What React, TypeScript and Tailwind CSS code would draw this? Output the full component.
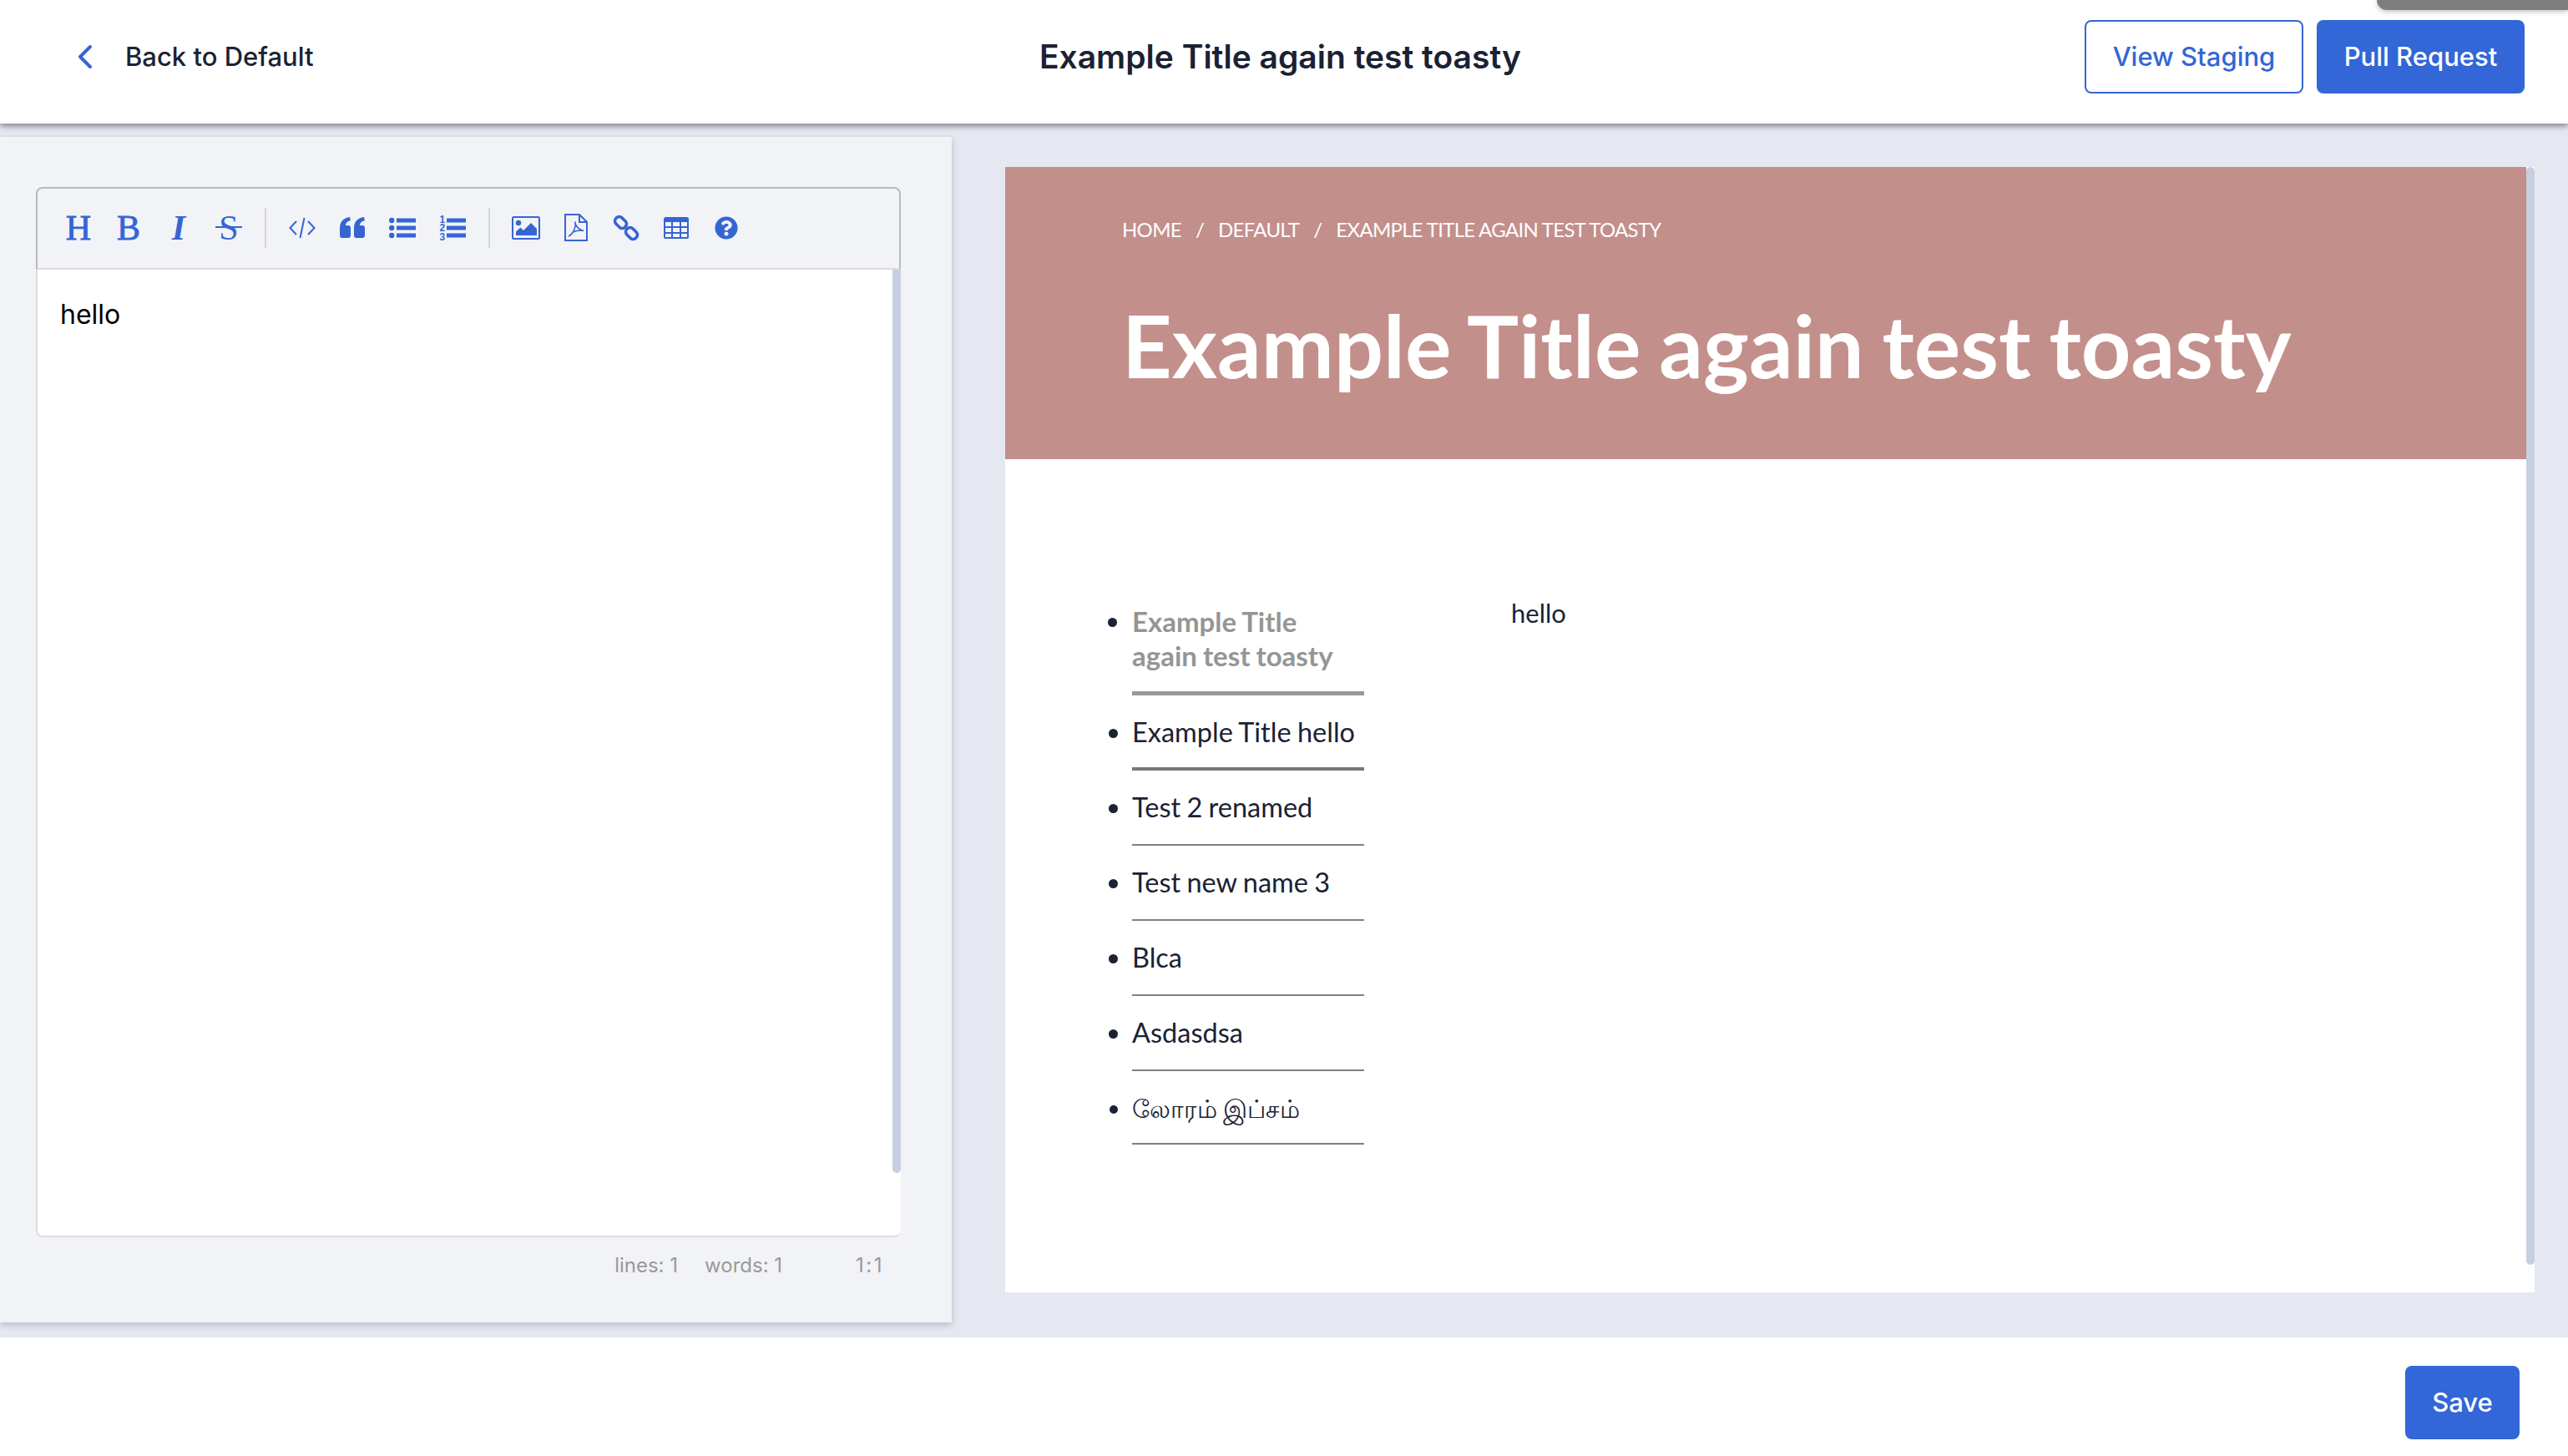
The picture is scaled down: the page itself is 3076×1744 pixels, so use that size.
import React from 'react';
import { ChevronLeft } from 'lucide-react';
import { FaQuestionCircle } from 'react-icons/fa';

const blue = 'text-[#3565d2]';

const CodeIcon = () => (
  <svg width="32" height="26" viewBox="0 0 32 26" fill="none" stroke="currentColor" strokeWidth="2">
    <path d="M9 5 L1.500 13 L9 21" />
    <path d="M23 5 L30.500 13 L23 21" />
    <path d="M18.500 1 L13.500 25" />
  </svg>
);

const QuoteIcon = () => (
  <svg width="30" height="26" viewBox="0 0 30 26" fill="currentColor">
    <path d="M0 13 C0 6 4 1 12 0 L13 4 C9 5 7 7 7 10 L10 10 A3 3 0 0 1 13 13 V22 A3 3 0 0 1 10 25 H3 A3 3 0 0 1 0 22 Z" />
    <path d="M17 13 C17 6 21 1 29 0 L30 4 C26 5 24 7 24 10 L27 10 A3 3 0 0 1 30 13 V22 A3 3 0 0 1 27 25 H20 A3 3 0 0 1 17 22 Z" />
  </svg>
);

const ListIcon = () => (
  <svg width="32" height="26" viewBox="0 0 32 26" fill="currentColor">
    <circle cx="3.200" cy="4" r="3.200" />
    <circle cx="3.200" cy="13" r="3.200" />
    <circle cx="3.200" cy="22" r="3.200" />
    <rect x="9" y="1.500" width="23" height="5" />
    <rect x="9" y="10.500" width="23" height="5" />
    <rect x="9" y="19.500" width="23" height="5" />
  </svg>
);

const OrderedListIcon = () => (
  <svg width="32" height="36" viewBox="0 0 32 36" fill="currentColor" className="overflow-visible">
    <rect x="9" y="6.500" width="23" height="5" />
    <rect x="9" y="15.500" width="23" height="5" />
    <rect x="9" y="24.500" width="23" height="5" />
    <g fontFamily="Liberation Sans, sans-serif" fontWeight="700" fontSize="12">
      <text x="0.500" y="11.500">1</text>
      <text x="0.500" y="22">2</text>
      <text x="0.500" y="32.500">3</text>
    </g>
  </svg>
);

const ImageIcon = () => (
  <svg width="34" height="28" viewBox="0 0 34 28" fill="currentColor">
    <rect x="1" y="1" width="32" height="26" rx="1.500" fill="none" stroke="currentColor" strokeWidth="2" />
    <circle cx="8" cy="8" r="3.200" />
    <path d="M5 23 V18.500 L10.500 13.500 L14 17 L23 8 L30 15 V23 Z" />
  </svg>
);

const PdfIcon = () => (
  <svg width="28" height="33" viewBox="0 0 28 33" fill="none" stroke="currentColor" strokeWidth="2">
    <path d="M1 1 H18 L27 10 V32 H1 Z" />
    <path d="M18 1 V10 H27" />
    <path d="M5 27 C9 25 12 20 13 15 C13.500 12 12.500 9.500 12.500 9.500 C13.500 15 17 19 23 20.500 C18 19 11 21 8 24" strokeWidth="1.500" />
  </svg>
);

const LinkIcon = () => (
  <svg width="32" height="32" viewBox="0 0 32 32" fill="none" stroke="currentColor" strokeWidth="3.600">
    <rect x="2" y="4.500" width="15" height="10" rx="4.500" transform="rotate(45 9.500 9.500)" />
    <rect x="15" y="17.500" width="15" height="10" rx="4.500" transform="rotate(45 22.500 22.500)" />
  </svg>
);

const TableIcon = () => (
  <svg width="30" height="26" viewBox="0 0 30 26" fill="currentColor">
    <path
      fillRule="evenodd"
      d="M2.500 0 H27.500 A2.500 2.500 0 0 1 30 2.500 V23.500 A2.500 2.500 0 0 1 27.500 26 H2.500 A2.500 2.500 0 0 1 0 23.500 V2.500 A2.500 2.500 0 0 1 2.500 0 Z
      M2 6 V11 H9 V6 Z M11 6 V11 H19 V6 Z M21 6 V11 H28 V6 Z
      M2 13 V18 H9 V13 Z M11 13 V18 H19 V13 Z M21 13 V18 H28 V13 Z
      M2 20 V24 H9 V20 Z M11 20 V24 H19 V20 Z M21 20 V24 H28 V20 Z"
    />
  </svg>
);

const ToolButton = ({ children }: { children: React.ReactNode }) => (
  <div className={`w-[60px] h-[36px] flex items-center justify-center ${blue}`}>{children}</div>
);

const Divider = () => (
  <div className="w-[28px] flex justify-center">
    <div className="w-[2px] h-[48px] bg-[#d6d6d6]" />
  </div>
);

const Letter = ({ children, className }: { children: string; className: string }) => (
  <span className={`font-['Liberation_Serif',serif] text-[42px] leading-none ${className}`}>{children}</span>
);

const Toolbar = () => (
  <div className="h-[99px] flex items-center pl-[19px] pb-[2px] bg-[#f2f3f7] border-2 border-[#b9babc] border-b-[#dddddd] rounded-t-[8px]">
    <ToolButton>
      <Letter className="[-webkit-text-stroke:0.8px_#3565d2]">H</Letter>
    </ToolButton>
    <ToolButton>
      <Letter className="[-webkit-text-stroke:0.8px_#3565d2]">B</Letter>
    </ToolButton>
    <ToolButton>
      <Letter className="font-bold italic">I</Letter>
    </ToolButton>
    <ToolButton>
      <span className="relative flex justify-center w-[32px]">
        <Letter className="">S</Letter>
        <span className="absolute left-0 right-0 top-[19px] h-[2px] bg-[#3565d2]" />
      </span>
    </ToolButton>
    <Divider />
    <ToolButton>
      <CodeIcon />
    </ToolButton>
    <ToolButton>
      <QuoteIcon />
    </ToolButton>
    <ToolButton>
      <ListIcon />
    </ToolButton>
    <ToolButton>
      <OrderedListIcon />
    </ToolButton>
    <Divider />
    <ToolButton>
      <ImageIcon />
    </ToolButton>
    <ToolButton>
      <PdfIcon />
    </ToolButton>
    <ToolButton>
      <LinkIcon />
    </ToolButton>
    <ToolButton>
      <TableIcon />
    </ToolButton>
    <ToolButton>
      <FaQuestionCircle size={28} />
    </ToolButton>
  </div>
);

const navItems = ['Test 2 renamed', 'Test new name 3', 'Blca', 'Asdasdsa'];

const App = () => {
  return (
    <div className="relative h-[1744px] w-[3076px] flex flex-col overflow-hidden bg-white font-['Inter',sans-serif] text-[#1a2233]">
      {/* bar peeking in from the top edge */}
      <div className="absolute top-0 right-0 z-20 w-[229px] h-[12px] bg-[#7f7d80] rounded-bl-[12px] shadow-[0_2px_6px_rgba(0,0,0,0.25)]" />

      <header className="relative z-10 h-[148px] shrink-0 bg-white flex items-center justify-between pl-[78px] pr-[52px] pb-[12px] shadow-[0_3px_7px_rgba(0,0,0,0.45)]">
        <div className="w-[865px] flex items-center gap-[24px]">
          <ChevronLeft size={48} strokeWidth={2} className={blue} />
          <span className="text-[31px] font-medium">Back to Default</span>
        </div>
        <h1 className="text-[39px] font-semibold">Example Title again test toasty</h1>
        <div className="w-[900px] flex justify-end gap-[16px]">
          <button className="h-[88px] w-[262px] rounded-[8px] border-2 border-[#3366d6] text-[31px] font-medium text-[#3366d6]">
            View Staging
          </button>
          <button className="h-[88px] w-[249px] rounded-[8px] bg-[#3366d6] text-[31px] font-medium text-white">
            Pull Request
          </button>
        </div>
      </header>

      <main className="h-[1454px] shrink-0 bg-[#e5e8f1] pt-[16px] flex items-start">
        <section className="w-[1140px] h-[1420px] shrink-0 bg-[#f2f3f7] pl-[43px] pt-[60px] shadow-[0_3px_8px_rgba(0,0,0,0.2)]">
          <div className="w-[1036px]">
            <Toolbar />
            <div className="h-[1159px] flex bg-white border-2 border-t-0 border-r-0 border-[#dddddd] rounded-b-[8px]">
              <div className="flex-1 pl-[27px] pt-[32px] text-[32px] leading-[44px] text-black">hello</div>
              <div className="w-[10px] h-[1082px] rounded-b-[5px] bg-[#c7cfe0]" />
            </div>
            <div className="flex justify-end pt-[16px] pr-[20px] text-[24px] text-[#999999]">
              <span>lines: 1</span>
              <span className="ml-[32px]">words: 1</span>
              <span className="ml-[88px] tracking-[2.5px]">1:1</span>
            </div>
          </div>
        </section>

        <section className="ml-[64px] mt-[36px] w-[1832px] h-[1348px] flex bg-white font-['Lato',sans-serif]">
          <div className="flex-1">
            <div className="h-[350px] bg-[#c38f8b] pl-[140px] pt-[60px] text-white">
              <div className="flex gap-[17px] text-[24px] leading-[30px] tracking-[-0.7px]">
                <span>HOME</span>
                <span>/</span>
                <span>DEFAULT</span>
                <span>/</span>
                <span>EXAMPLE TITLE AGAIN TEST TOASTY</span>
              </div>
              <h2 className="mt-[58px] text-[104px] leading-[130px] font-bold [word-spacing:-3.5px]">
                Example Title again test toasty
              </h2>
            </div>
            <div className="flex pt-[164px] pl-[130px]">
              <ul className="w-[278px] ml-[22px] list-disc [word-spacing:-1px]">
                <li className="h-[119px] border-b-[5px] border-[#999999] pt-[10px] text-[33px] leading-[41px] font-bold text-[#959595] marker:text-[#1a2233]">
                  Example Title again test toasty
                </li>
                <li className="h-[90px] pt-[24px] border-b-[4px] border-[#777777] text-[32.5px] leading-[40px]">
                  Example Title hello
                </li>
                {navItems.map((item) => (
                  <li key={item} className="h-[90px] pt-[24px] border-b-2 border-[#808080] text-[32.5px] leading-[40px]">
                    {item}
                  </li>
                ))}
                <li className="h-[88px] pt-[24px] border-b-2 border-[#808080] text-[30px] leading-[40px]">
                  லோரம் இப்சம்
                </li>
              </ul>
              <p className="ml-[176px] text-[31px] leading-[40px]">hello</p>
            </div>
          </div>
          <div className="w-[10px] h-[1315px] rounded-[5px] bg-[#c7cfe0]" />
        </section>
      </main>

      <footer className="flex-1 bg-white flex justify-end items-start pt-[34px] pr-[58px]">
        <button className="h-[88px] w-[137px] rounded-[8px] bg-[#3366d6] text-[31px] font-medium text-white">
          Save
        </button>
      </footer>
    </div>
  );
};

export default App;
